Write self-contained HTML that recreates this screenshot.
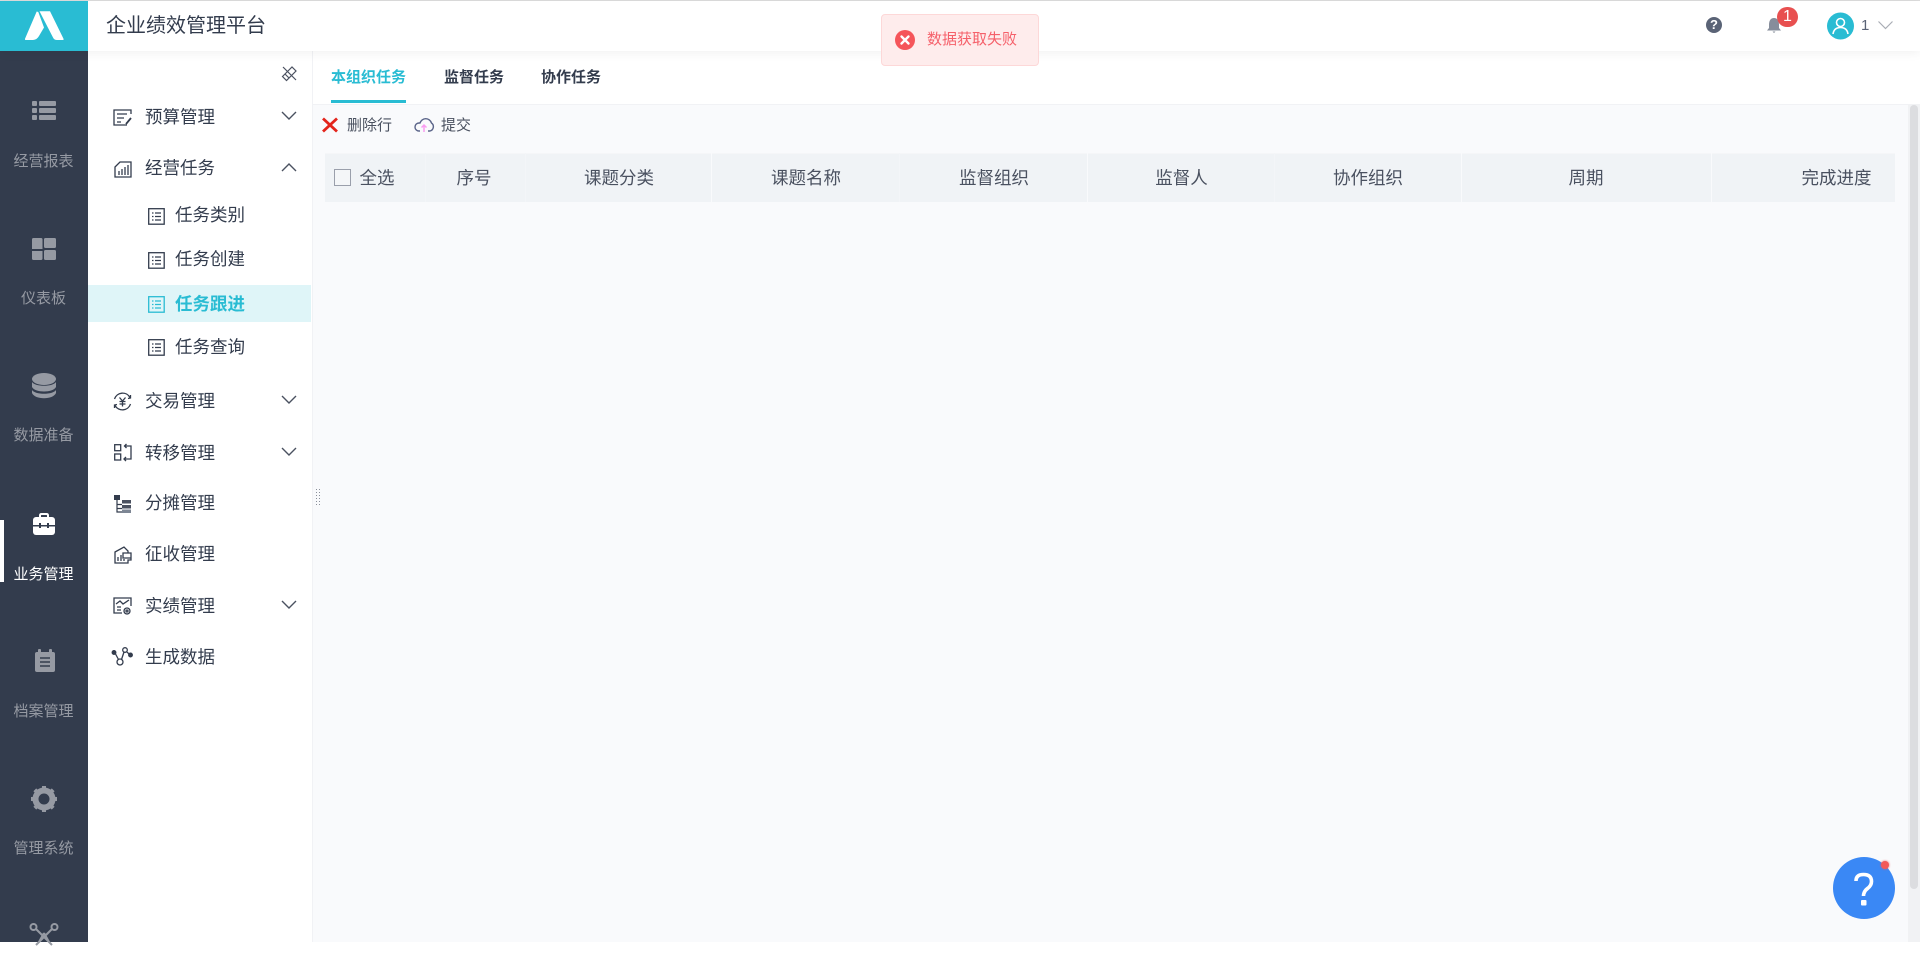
<!DOCTYPE html>
<html lang="zh"><head><meta charset="utf-8"><title>企业绩效管理平台</title>
<style>
*{margin:0;padding:0;box-sizing:border-box}
html,body{width:1920px;height:942px;overflow:hidden;background:#fff;font-family:"Liberation Sans","Noto Sans CJK SC",sans-serif;color:#333c4d}
.a{position:absolute;white-space:nowrap}
svg{position:absolute;overflow:visible}
.side{color:#969aa3;font-size:15px;line-height:20px;width:88px;text-align:center;left:-.5px}
.m{font-size:17.5px;line-height:24px;left:145px;color:#333c4d}
.s{font-size:17.5px;line-height:24px;left:175px;color:#333c4d}
.th{font-size:17.5px;line-height:24px;top:166px;color:#4a5160;transform:translateX(-50%)}
.div{position:absolute;top:153px;width:1px;height:49px;background:#f9fafc}
.fd{background:#f3f5f8}
.ic{fill:none;stroke:#333c4d;stroke-width:1.3}
.ch{fill:none;stroke:#4a5160;stroke-width:1.4}
</style></head><body>
<div class="a" style="left:0;top:0;width:1920px;height:1px;background:#dcdcdc"></div>
<div class="a" style="left:312px;top:51px;width:1608px;height:891px;background:#f9fafc"></div>
<div class="a" style="left:312px;top:51px;width:1608px;height:54px;background:#fff;border-bottom:1px solid #f1f2f5"></div>
<div class="a" style="left:88px;top:51px;width:225px;height:891px;background:#fff;border-right:1px solid #f1f2f5"></div>
<div class="a" style="left:0;top:51px;width:88px;height:891px;background:#333c4d"></div>
<div class="a" style="left:0;top:1px;width:1920px;height:50px;background:#fff;box-shadow:0 2px 10px rgba(0,0,0,.06)"></div>
<div class="a" style="left:0;top:1px;width:88px;height:50px;background:#29bcd3"></div>
<svg style="left:0;top:0" width="88" height="51" fill="#fff"><path d="M36.700 11.500L25 38.700Q24.700 40 26 40H33Q37 39.700 39 36L44 27.500 38.300 12Z"/><path d="M39.500 11.300H50L63.500 38.700Q64 40 62.500 40H57Q54 40 53 37.500Z"/></svg>
<div class="a" style="left:106px;top:12px;font-size:20px;line-height:28px;color:#333c4d">企业绩效管理平台</div>

<!-- sidebar -->
<svg style="left:32px;top:100px" width="24" height="22" fill="#969aa3"><rect width="5" height="5" x="0" y="1" rx="1"/><rect width="17" height="5" x="7" y="1" rx="1"/><rect width="5" height="5" x="0" y="8" rx="1"/><rect width="17" height="5" x="7" y="8" rx="1"/><rect width="5" height="5" x="0" y="15" rx="1"/><rect width="17" height="5" x="7" y="15" rx="1"/></svg>
<div class="a side" style="top:152px">经营报表</div>
<svg style="left:32px;top:238px" width="24" height="22" fill="#969aa3"><rect x="0" y="0" width="10.500" height="22" rx="1.500"/><rect x="12" y="0" width="12" height="10" rx="1.500"/><rect x="12" y="12" width="12" height="10" rx="1.500"/><rect x="0" y="11" width="10.500" height="2" fill="#333c4d"/></svg>
<div class="a side" style="top:289px">仪表板</div>
<svg style="left:32px;top:373px" width="24" height="26" fill="#969aa3"><ellipse cx="12" cy="6" rx="12" ry="6"/><path d="M0 9C3 14 21 14 24 9V14C21 20 3 20 0 14Z"/><path d="M0 17C3 22 21 22 24 17V20C21 27 3 27 0 20Z"/></svg>
<div class="a side" style="top:426px">数据准备</div>
<div class="a" style="left:0;top:520px;width:4px;height:62px;background:#fff"></div>
<svg style="left:33px;top:513px" width="22" height="22"><path d="M7 4V2.500Q7 1 8.500 1H13.500Q15 1 15 2.500V4" fill="none" stroke="#fff" stroke-width="2"/><rect x="0" y="4" width="22" height="18" rx="3" fill="#fff"/><rect x="0" y="12" width="22" height="1.500" fill="#333c4d"/><rect x="6" y="10" width="2" height="5" fill="#333c4d"/><rect x="14" y="10" width="2" height="5" fill="#333c4d"/></svg>
<div class="a side" style="top:565px;color:#fff">业务管理</div>
<svg style="left:35px;top:649px" width="20" height="23"><path d="M2 3H18Q20 3 20 5V21Q20 23 18 23H2Q0 23 0 21V5Q0 3 2 3Z" fill="#969aa3"/><rect x="3" y="0" width="3" height="5" rx="1" fill="#969aa3"/><rect x="14" y="0" width="3" height="5" rx="1" fill="#969aa3"/><path d="M5 9H15M5 13H15M5 17H15" stroke="#333c4d" stroke-width="1.600"/></svg>
<div class="a side" style="top:702px">档案管理</div>
<svg style="left:31px;top:786px" width="26" height="26"><circle cx="13" cy="13" r="8.500" fill="none" stroke="#969aa3" stroke-width="6"/><path d="M13 0V26M0 13H26M3.800 3.800L22.200 22.200M22.200 3.800L3.800 22.200" stroke="#969aa3" stroke-width="4" stroke-dasharray="4.500 17 4.500 100"/></svg>
<div class="a side" style="top:839px">管理系统</div>
<svg style="left:30px;top:923px" width="28" height="30" fill="none" stroke="#969aa3" stroke-width="2"><circle cx="3.500" cy="4" r="3"/><circle cx="24.500" cy="4" r="3"/><path d="M6 6L22 22M22 6L6 22M14 10L9 19M14 10L19 19"/></svg>

<!-- menu -->
<svg style="left:281px;top:65px" width="17" height="17" fill="none" stroke="#4a5160" stroke-width="1.200"><path d="M1.500 11.500L11 2 15 6 5.500 15.500ZM4 9L8 13M2 2L15 15" /></svg>
<svg style="left:113px;top:109px" width="19" height="17" class="ic"><path d="M18 5V1H1V16H14M4 5H14M4 9H11M4 13H8" /><path d="M13 15L18 9" stroke-width="1.800"/></svg>
<div class="a m" style="top:105px">预算管理</div>
<svg style="left:282px;top:112px" width="14" height="8" class="ch"><path d="M0 0L7 7 14 0"/></svg>
<svg style="left:114px;top:161px" width="18" height="17" class="ic"><path d="M1 6L6 1H17V16H1ZM5 14V10M8 14V8M11 14V6M14 14V4"/></svg>
<div class="a m" style="top:156px">经营任务</div>
<svg style="left:282px;top:164px" width="14" height="8" class="ch"><path d="M0 7L7 0 14 7"/></svg>
<svg style="left:148px;top:208px" width="17" height="17" class="ic"><rect x=".7" y=".7" width="15.500" height="15.500"/><path d="M4 5H5.500M7 5H13M4 8.500H5.500M7 8.500H13M4 12H5.500M7 12H13"/></svg>
<div class="a s" style="top:203px">任务类别</div>
<svg style="left:148px;top:252px" width="17" height="17" class="ic"><rect x=".7" y=".7" width="15.500" height="15.500"/><path d="M4 5H5.500M7 5H13M4 8.500H5.500M7 8.500H13M4 12H5.500M7 12H13"/></svg>
<div class="a s" style="top:247px">任务创建</div>
<div class="a" style="left:88px;top:285px;width:223px;height:37px;background:#dff5f8"></div>
<svg style="left:148px;top:296px;stroke:#29bcd3" width="17" height="17" class="ic"><rect x=".7" y=".7" width="15.500" height="15.500"/><path d="M4 5H5.500M7 5H13M4 8.500H5.500M7 8.500H13M4 12H5.500M7 12H13"/></svg>
<div class="a s" style="top:292px;color:#29bcd3;font-weight:700">任务跟进</div>
<svg style="left:148px;top:339px" width="17" height="17" class="ic"><rect x=".7" y=".7" width="15.500" height="15.500"/><path d="M4 5H5.500M7 5H13M4 8.500H5.500M7 8.500H13M4 12H5.500M7 12H13"/></svg>
<div class="a s" style="top:335px">任务查询</div>
<svg style="left:113px;top:392px" width="19" height="19" class="ic"><path d="M1.500 7A8.500 8.500 0 0 1 17 5.500M17.500 12A8.500 8.500 0 0 1 2 13.500M15 6.500L17.500 6 17.500 3M4 12.500L1.500 13 1.500 16M6.500 5.500L9.500 9 12.500 5.500M6.500 9.500H12.500M6.500 12H12.500M9.500 9V14.500"/></svg>
<div class="a m" style="top:389px">交易管理</div>
<svg style="left:282px;top:396px" width="14" height="8" class="ch"><path d="M0 0L7 7 14 0"/></svg>
<svg style="left:114px;top:444px" width="18" height="17" class="ic"><rect x=".7" y=".7" width="6" height="6"/><rect x=".7" y="10" width="6" height="6"/><path d="M11 2H17V15H10M12.500 0L10.500 2 12.500 4M12 13L10 15 12 17"/></svg>
<div class="a m" style="top:441px">转移管理</div>
<svg style="left:282px;top:448px" width="14" height="8" class="ch"><path d="M0 0L7 7 14 0"/></svg>
<svg style="left:114px;top:495px" width="17" height="18"><rect x="0" y="0" width="6" height="5" fill="#333c4d"/><path d="M3 5V17H8M3 9.500H8M3 13.500H8" fill="none" stroke="#333c4d" stroke-width="1.200"/><rect x="8" y="5" width="9" height="3.500" fill="#4a5160"/><rect x="8" y="10" width="9" height="3.500" fill="#4a5160"/><rect x="8" y="14.500" width="9" height="3.500" fill="#7d8694"/></svg>
<div class="a m" style="top:491px">分摊管理</div>
<svg style="left:114px;top:546px" width="18" height="18" class="ic"><path d="M1 6L10 1 14 5V7H17V14H14V17H1ZM14 7H9V12H14M14 12H17"/><path d="M4 15V11M7 15V9M10 15V13"/></svg>
<div class="a m" style="top:542px">征收管理</div>
<svg style="left:113px;top:597px" width="19" height="18" class="ic"><path d="M9 16H1V1H18V9M4 13H8M4 10H8M3 7L7 4 10 7 16 3"/><circle cx="14" cy="14" r="3"/><circle cx="14" cy="14" r="1"/></svg>
<div class="a m" style="top:594px">实绩管理</div>
<svg style="left:282px;top:601px" width="14" height="8" class="ch"><path d="M0 0L7 7 14 0"/></svg>
<svg style="left:112px;top:647px" width="21" height="19" fill="none" stroke="#333c4d" stroke-width="1.300"><circle cx="13" cy="3" r="2.300"/><circle cx="8" cy="15" r="3"/><path d="M9.500 12.500L12 5M3 6L6.500 12.500M15 5L17 7"/><circle cx="2" cy="5.500" r="1.800" fill="#333c4d"/><circle cx="18.500" cy="8" r="1.800" fill="#333c4d"/></svg>
<div class="a m" style="top:645px">生成数据</div>
<svg style="left:316px;top:489px" width="6" height="16" fill="#8a8f99"><path d="M0 0h1v1H0zM3 0h1v1H3zM0 3h1v1H0zM3 3h1v1H3zM0 6h1v1H0zM3 6h1v1H3zM0 9h1v1H0zM3 9h1v1H3zM0 12h1v1H0zM3 12h1v1H3zM0 15h1v1H0zM3 15h1v1H3z"/></svg>

<!-- tabs -->
<div class="a" style="left:331px;top:67px;font-size:15px;line-height:21px;font-weight:700;color:#29bcd3">本组织任务</div>
<div class="a" style="left:331px;top:100px;width:75px;height:3px;background:#29bcd3"></div>
<div class="a" style="left:444px;top:67px;font-size:15px;line-height:21px;font-weight:700;color:#333c4d">监督任务</div>
<div class="a" style="left:541px;top:67px;font-size:15px;line-height:21px;font-weight:700;color:#333c4d">协作任务</div>

<!-- toolbar -->
<svg style="left:322px;top:118px" width="16" height="14" fill="none" stroke="#e3241b" stroke-width="2.800"><path d="M1 .5L15 13.500M15 .5L1 13.500"/></svg>
<div class="a" style="left:347px;top:115px;font-size:15px;line-height:21px;color:#4a5160">删除行</div>
<svg style="left:414px;top:117px" width="21" height="16" fill="none"><path d="M6 14H5A4 4 0 0 1 5 6H6A6 6 0 0 1 17.500 6A4.500 4.500 0 0 1 16 14H14" stroke="#5a6489" stroke-width="1.400"/><path d="M10 15V8M7.500 10.500L10 8 12.500 10.500" stroke="#f99cf0" stroke-width="1.500"/></svg>
<div class="a" style="left:441px;top:115px;font-size:15px;line-height:21px;color:#4a5160">提交</div>

<!-- table -->
<div class="a" style="left:325px;top:153px;width:1570px;height:49px;background:#f0f3f6;border-top:1px solid #f5f6f8"></div>
<div class="div fd" style="left:425px"></div><div class="div fd" style="left:525px"></div><div class="div" style="left:711px"></div><div class="div fd" style="left:899px"></div><div class="div" style="left:1087px"></div><div class="div fd" style="left:1274px"></div><div class="div" style="left:1461px"></div><div class="div" style="left:1711px"></div>
<div class="a" style="left:334px;top:169px;width:17px;height:17px;border:1px solid #9a9fab;background:#f4f6f8"></div>
<div class="a th" style="left:377px">全选</div>
<div class="a th" style="left:474px">序号</div>
<div class="a th" style="left:619px">课题分类</div>
<div class="a th" style="left:806px">课题名称</div>
<div class="a th" style="left:994px">监督组织</div>
<div class="a th" style="left:1181.500px">监督人</div>
<div class="a th" style="left:1368px">协作组织</div>
<div class="a th" style="left:1586px">周期</div>
<div class="a th" style="left:1836.500px">完成进度</div>

<!-- scrollbar -->
<div class="a" style="left:1908px;top:104px;width:12px;height:838px;background:#f1f2f4"></div>
<div class="a" style="left:1910px;top:105px;width:8px;height:784px;border-radius:4px;background:#dcdde0"></div>

<!-- help -->
<div class="a" style="left:1833px;top:857px;width:62px;height:62px;border-radius:50%;background:#3a88f5"></div>
<svg style="left:0;top:0" width="1920" height="942" fill="none"><path d="M1856 881Q1856 874.500 1863.500 874.500Q1871.500 874.500 1871.500 881.500Q1871.500 885.500 1867.500 888.500Q1863.500 891.500 1863.500 896" stroke="#fff" stroke-width="3.600"/><rect x="1861" y="900" width="5.500" height="5.500" rx="1" fill="#fff"/></svg>
<div class="a" style="left:1881px;top:861px;width:8px;height:8px;border-radius:50%;background:#f25a5a;box-shadow:0 0 2px #f25a5a"></div>

<!-- top right -->
<div class="a" style="left:1706px;top:17px;width:16px;height:16px;border-radius:50%;background:#5a6376;color:#fff;font-size:13px;font-weight:700;line-height:16px;text-align:center">?</div>
<svg style="left:1767px;top:17px" width="14" height="16" fill="#868d9b"><path d="M7 1Q11.500 1 12 7V11L14 13.500H0L2 11V7Q2.500 1 7 1ZM5.500 14.500H8.500L7 16Z"/></svg>
<div class="a" style="left:1777px;top:7px;width:21px;height:20px;border-radius:10px;background:#e85050;color:#fff;font-size:16px;line-height:19px;text-align:center">1</div>
<svg style="left:1827px;top:12px" width="27" height="28"><circle cx="13.500" cy="14" r="13.500" fill="#29bcd3"/><circle cx="13.500" cy="10.500" r="4" fill="none" stroke="#fff" stroke-width="1.600"/><path d="M6 22Q7 15.500 13.500 15.500T21 22" fill="none" stroke="#fff" stroke-width="1.600"/></svg>
<div class="a" style="left:1861px;top:16px;font-size:15px;line-height:20px;color:#5a6376">1</div>
<svg style="left:1878px;top:21px" width="15" height="9" fill="none" stroke="#a9adb5" stroke-width="1.200"><path d="M.5 .5L7.500 7.500 14.500 .5"/></svg>

<!-- toast -->
<div class="a" style="left:881px;top:14px;width:158px;height:52px;border-radius:4px;background:rgba(254,235,235,.95);border:1px solid #fdd8d8"></div>
<svg style="left:895px;top:30px" width="20" height="20"><circle cx="10" cy="10" r="10" fill="#f5555a"/><path d="M6.500 6.500L13.500 13.500M13.500 6.500L6.500 13.500" stroke="#fff" stroke-width="2.400" stroke-linecap="round"/></svg>
<div class="a" style="left:927px;top:29px;font-size:15px;line-height:21px;color:#f5606a">数据获取失败</div>
</body></html>
